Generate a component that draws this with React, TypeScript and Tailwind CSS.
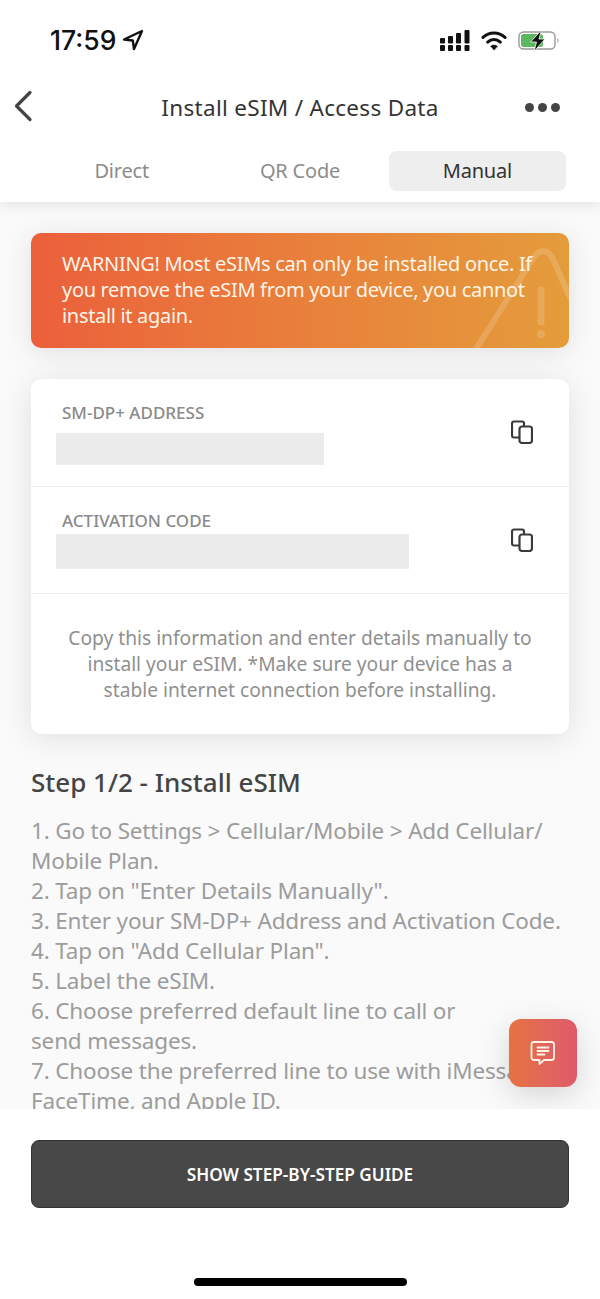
const font = { fontFamily: '"Noto Sans", Roboto, sans-serif' }

function StatusBar() {
  return (
    <div className="flex h-[78px] items-center justify-between pl-[50px] pr-[40px] pt-[2px]">
      <div className="flex items-center gap-[6px]">
        <span className="font-['Inter',sans-serif] text-[26.500px] font-medium leading-none text-[#111]">17:59</span>
        <svg width="22" height="22" viewBox="0 0 22 22" fill="none" stroke="#111" strokeWidth="2.400" strokeLinejoin="round">
          <path d="M20 2 2 10.500l8.800 1 1.200 8.500z" />
        </svg>
      </div>
      <div className="flex items-center gap-[10px]">
        <svg width="30" height="21" viewBox="0 0 30 21" fill="#111">
          <rect x="0" y="8" width="5" height="5.500" rx="1" />
          <rect x="0" y="15" width="5" height="6" rx="1" />
          <rect x="8" y="6" width="5" height="7.500" rx="1" />
          <rect x="8" y="15" width="5" height="6" rx="1" />
          <rect x="16" y="3" width="5" height="10.500" rx="1" />
          <rect x="16" y="15" width="5" height="6" rx="1" />
          <rect x="24.500" y="0" width="5" height="13.500" rx="1" />
          <rect x="24.500" y="15" width="5" height="6" rx="1" />
        </svg>
        <svg width="28" height="21" viewBox="0 0 26 20" fill="none" stroke="#111" strokeLinecap="round">
          <path d="M2.500 7C8.500 1.500 17.500 1.500 23.500 7" strokeWidth="3" />
          <path d="M7 11.500c3.600-3.200 8.400-3.200 12 0" strokeWidth="3" />
          <path d="M13 19 9.800 15.400c1.900-1.500 4.500-1.500 6.400 0z" fill="#111" strokeWidth="0.500" />
        </svg>
        <svg width="42" height="23" viewBox="0 0 42 23" fill="none">
          <rect x="1" y="3" width="36" height="17" rx="4.500" stroke="#9a9a9a" strokeWidth="1.400" />
          <rect x="3" y="5" width="22" height="13" rx="2.500" fill="#5bb85f" />
          <path d="M39.500 9c1.300.4 1.300 4.600 0 5z" fill="#9a9a9a" />
          <path d="M23.500 1 12.500 13h6l-2.500 9.500L27 10h-6z" fill="#111" stroke="#fff" strokeWidth="0.800" />
        </svg>
      </div>
    </div>
  )
}

function Header() {
  return (
    <div className="relative z-10 bg-white shadow-[0_2px_14px_rgba(0,0,0,0.11)]">
      <StatusBar />
      <div className="relative flex h-[60px] items-center justify-center">
        <svg className="absolute left-[13px] top-[12px]" width="20" height="32" viewBox="0 0 20 32" fill="none" stroke="#444" strokeWidth="3.200" strokeLinecap="round" strokeLinejoin="round">
          <path d="M17 2.500 3.500 16 17 29.500" />
        </svg>
        <span className="text-[22.500px] tracking-[0.3px] text-[#333]">Install eSIM / Access Data</span>
        <div className="absolute right-[40px] top-[25px] flex gap-[4px]">
          <div className="h-[9px] w-[9px] rounded-full bg-[#444]" />
          <div className="h-[9px] w-[9px] rounded-full bg-[#444]" />
          <div className="h-[9px] w-[9px] rounded-full bg-[#444]" />
        </div>
      </div>
      <div className="grid h-[64px] grid-cols-3 px-[34px] pb-[11px] pt-[13px] text-[20px] tracking-[-0.2px]">
        <div className="flex items-center justify-center pr-[2px] text-[#8c8c8c]">Direct</div>
        <div className="flex items-center justify-center text-[#8c8c8c]">QR Code</div>
        <div className="flex items-center justify-center rounded-[8px] bg-[#eeeeee] text-[#333]">Manual</div>
      </div>
    </div>
  )
}

function WarningCard() {
  return (
    <div className="relative h-[115px] overflow-hidden rounded-[10px] bg-gradient-to-r from-[#eb5f3b] to-[#e49c3b] pl-[31px] pt-[18px] shadow-[0_4px_28px_rgba(0,0,0,0.11)]">
      <svg className="absolute bottom-0 right-0" width="100" height="102" viewBox="0 0 100 102" fill="none" stroke="#fff" strokeOpacity="0.16" strokeLinecap="round">
        <path d="M4 108 65 11q9-12 18 0L112 76" strokeWidth="6" />
        <path d="M72 44v32" strokeWidth="7" />
        <circle cx="72" cy="88" r="4" fill="#fff" fillOpacity="0.16" stroke="none" />
      </svg>
      <p className="relative w-[500px] text-[20px] leading-[26px] tracking-[-0.32px] text-[#fff4e8]">
        WARNING! Most eSIMs can only be installed once. If you remove the eSIM from your device, you cannot install it again.
      </p>
    </div>
  )
}

function CopyIcon() {
  return (
    <svg width="22" height="24" viewBox="0 0 22 24" fill="none" stroke="#3a3a3a" strokeWidth="2.200">
      <path d="M13 6V3.500a2 2 0 0 0-2-2H3a2 2 0 0 0-2 2v12a2 2 0 0 0 2 2h5.500" />
      <rect x="8.500" y="6.500" width="12.500" height="16.500" rx="2.500" />
    </svg>
  )
}

function CodeRow({ label, barClass }: { label: string; barClass: string }) {
  return (
    <div className="relative h-[107.500px] border-b border-[#ececec] pl-[25px] pt-[23px]">
      <div className="pl-[6px] text-[17px] font-medium leading-[22px] text-[#8a8a8a]">{label}</div>
      <div className={`bg-[#ececec] ${barClass}`} />
      <div className="absolute right-[36px] top-[41px]">
        <CopyIcon />
      </div>
    </div>
  )
}

function AddressCard() {
  return (
    <div className="mt-[31px] overflow-hidden rounded-[10px] bg-white shadow-[0_4px_30px_rgba(0,0,0,0.11)]">
      <CodeRow label="SM-DP+ ADDRESS" barClass="mt-[9px] h-[32px] w-[268px]" />
      <CodeRow label="ACTIVATION CODE" barClass="mt-[2px] h-[35px] w-[353px]" />
      <p className="px-[30px] pb-[31px] pt-[31px] text-center text-[19.200px] leading-[26px] text-[#8f8f8f]">
        Copy this information and enter details manually to install your eSIM. *Make sure your device has a stable internet connection before installing.
      </p>
    </div>
  )
}

export default function App() {
  return (
    <div className="relative flex h-[1299px] w-[600px] flex-col overflow-hidden bg-white" style={font}>
      <Header />
      <div className="flex-1 overflow-hidden bg-[#fafafa] px-[31px] pt-[31px]">
        <WarningCard />
        <AddressCard />
        <h2 className="mt-[29px] text-[26px] font-medium leading-[38px] text-[#444]">Step 1/2 - Install eSIM</h2>
        <div className="mt-[15px] w-[560px] text-[22.500px] leading-[30px] tracking-[-0.17px] text-[#9c9c9c]">
          <div>1. Go to Settings &gt; Cellular/Mobile &gt; Add Cellular/</div>
          <div>Mobile Plan.</div>
          <div>2. Tap on "Enter Details Manually".</div>
          <div>3. Enter your SM-DP+ Address and Activation Code.</div>
          <div>4. Tap on "Add Cellular Plan".</div>
          <div>5. Label the eSIM.</div>
          <div>6. Choose preferred default line to call or</div>
          <div>send messages.</div>
          <div className="whitespace-nowrap">7. Choose the preferred line to use with iMessage,</div>
          <div>FaceTime, and Apple ID.</div>
        </div>
      </div>
      <div className="absolute left-[509px] top-[1019px] z-10 flex h-[68px] w-[68px] items-center justify-center rounded-[12px] bg-gradient-to-r from-[#e5733f] to-[#de5a6c] shadow-[0_8px_30px_rgba(0,0,0,0.15)]">
        <svg width="26" height="26" viewBox="0 0 26 26" fill="none" stroke="#fff2e8" strokeWidth="1.800" strokeLinejoin="round" strokeLinecap="round">
          <path d="M4 2h18a2.500 2.500 0 0 1 2 2.500v13a2.500 2.500 0 0 1-2.500 2.500H14l-4.500 4v-4H4a2.500 2.500 0 0 1-2.500-2.500v-13A2.500 2.500 0 0 1 4 2z" />
          <path d="M7.500 7.500h11M7.500 11h11M7.500 14.500h7" />
        </svg>
      </div>
      <div className="relative z-10 h-[190px] bg-white px-[31px] pt-[31px]">
        <div className="flex h-[68px] items-center justify-center rounded-[8px] border border-[#333] bg-[#484848] pt-[1px] text-[17.200px] font-semibold text-white">
          SHOW STEP-BY-STEP GUIDE
        </div>
        <div className="absolute left-[194px] top-[169px] h-[8px] w-[213px] rounded-full bg-black" />
      </div>
    </div>
  )
}
